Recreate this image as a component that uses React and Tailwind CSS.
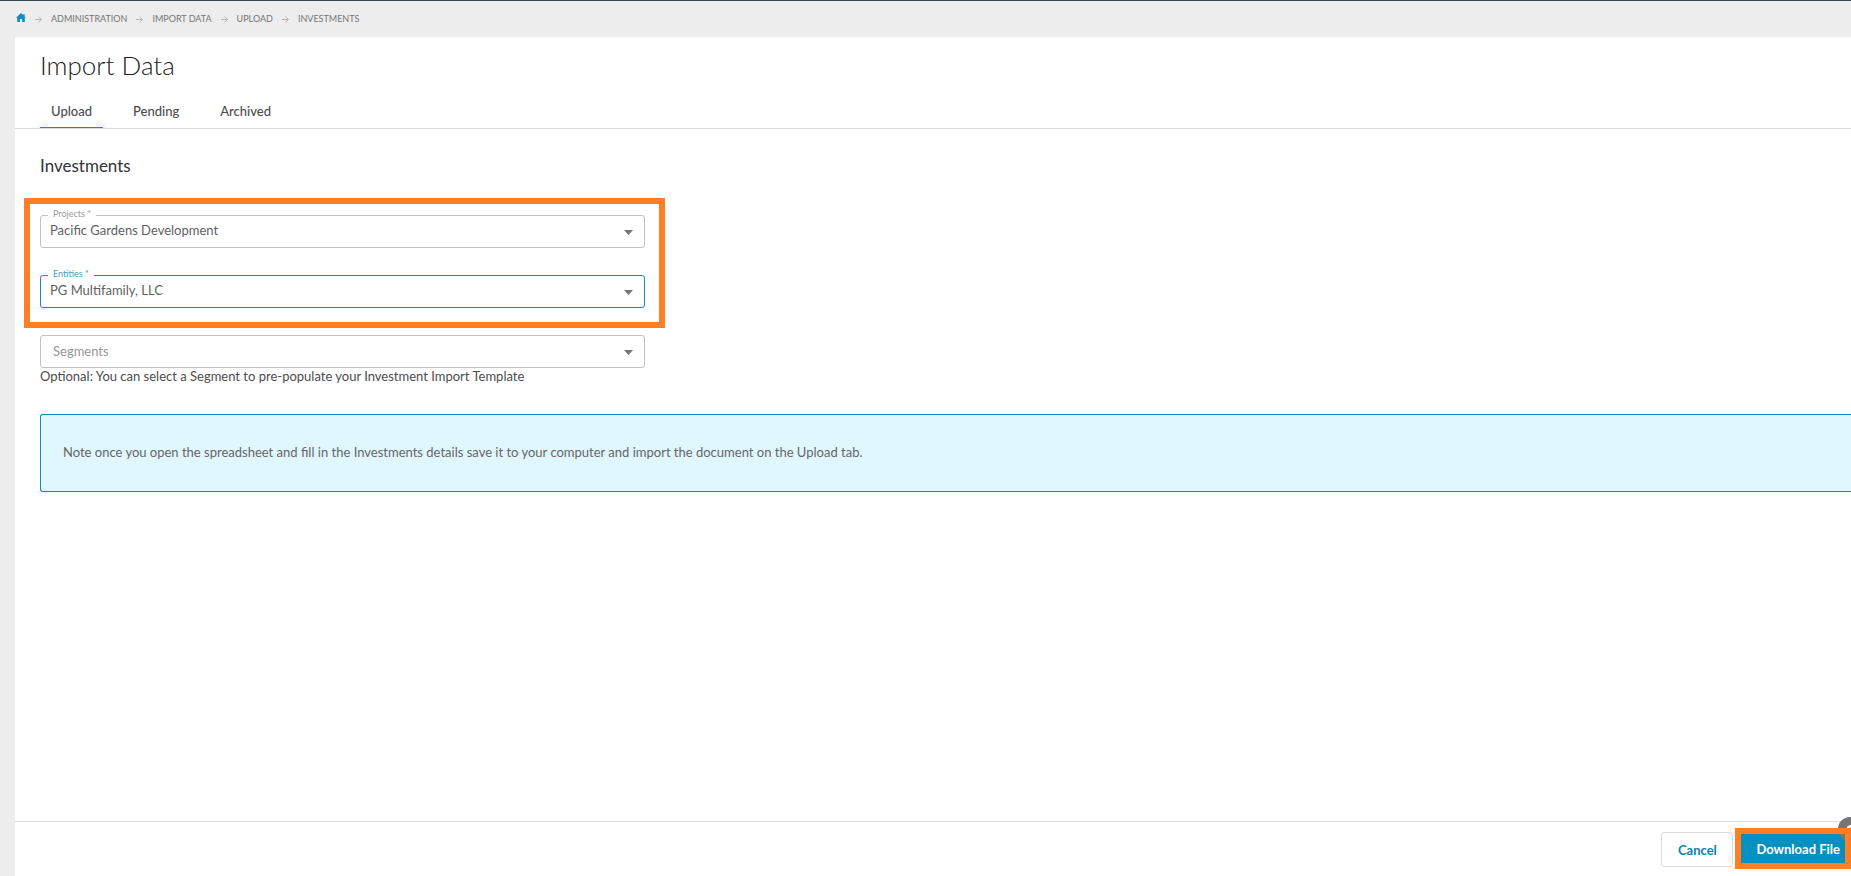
import { useState } from 'react';

const crumbs = ['Administration', 'Import Data', 'Upload', 'Investments'];
const tabs = ['Upload', 'Pending', 'Archived'];

function Arrow() {
  return (
    <svg className="w-[7px] h-[7px] shrink-0" viewBox="0 0 7 7" fill="none" stroke="#b4b4b4" strokeWidth="1">
      <path d="M0 3.5h6.2M3.5 0.6l2.9 2.9-2.9 2.9" />
    </svg>
  );
}

function SelectField({ id, label, value, options, onChange, active }) {
  const filled = value !== '';
  return (
    <div className="relative w-full h-[33px]">
      {filled ? (
        <label
          htmlFor={id}
          className={`absolute left-2 -top-[7px] px-[5px] bg-white text-[9px] leading-3 ${active ? 'text-[#4a9cc0]' : 'text-[#9b9b9b]'}`}
        >
          {label} *
        </label>
      ) : (
        <label htmlFor={id} className="absolute left-[13px] top-2 text-[13px] leading-4 text-[#969696] pointer-events-none">
          {label}
        </label>
      )}
      <select
        id={id}
        value={value}
        onChange={(e) => onChange(e.target.value)}
        className={`w-full h-full appearance-none bg-transparent rounded-[3px] border pl-[9px] pr-8 pb-px text-[13px] text-[#5f5f5f] outline-none ${active ? 'border-[#0b8fb9]' : 'border-[#c1c1c1]'}`}
      >
        <option value=""></option>
        {options.map((o) => (
          <option key={o} value={o}>{o}</option>
        ))}
      </select>
      <svg className="absolute right-3 top-[15px] w-[9px] h-[5px] pointer-events-none" viewBox="0 0 9 5" fill="#757575">
        <path d="M0 0h9L4.5 5z" />
      </svg>
    </div>
  );
}

export default function App() {
  const [tab, setTab] = useState('Upload');
  const [project, setProject] = useState('Pacific Gardens Development');
  const [entity, setEntity] = useState('PG Multifamily, LLC');
  const [segment, setSegment] = useState('');

  return (
    <div className="min-h-screen flex flex-col overflow-hidden bg-[#ededed] border-t border-[#3c4654] font-['Lato','Open_Sans',sans-serif] text-[#4d4d4d]">
      <nav aria-label="Breadcrumb" className="h-9 flex items-center pl-4">
        <a href="#home" aria-label="Home" className="pb-1">
          <svg className="w-[10px] h-[9px]" viewBox="0 0 10 9" fill="#0b8fbf">
            <path d="M5 0L0 4.8h1.2V9h2.7V6h2.2v3h2.7V4.8H10L8.6 3.4V0.9H7.4v1.3z" />
          </svg>
        </a>
        {crumbs.map((c) => (
          <span key={c} className="flex items-center">
            <span className="mx-[9px]"><Arrow /></span>
            <a href={`#${c}`} className="text-[9px] uppercase text-[#757575]">{c}</a>
          </span>
        ))}
      </nav>

      <main className="flex-1 flex flex-col ml-[15px] bg-white">
        <h1 className="pt-3 pl-[25px] text-[26px] leading-8 font-light text-[#222]">Import Data</h1>

        <div role="tablist" className="flex gap-[19px] mt-[19px] pl-[25px] h-[29px] border-b border-[#dcdcdc]">
          {tabs.map((t) => (
            <button
              key={t}
              role="tab"
              aria-selected={tab === t}
              onClick={() => setTab(t)}
              className={`px-[11px] pb-1.5 text-[13px] leading-5 font-medium border-b ${tab === t ? 'border-[#0b8fb9]' : 'border-transparent'}`}
            >
              {t}
            </button>
          ))}
        </div>

        <section className="flex-1 pl-[25px]">
          <h2 className="mt-[25px] text-[17px] leading-6 text-[#333]">Investments</h2>

          <div className="-ml-4 mt-5 max-w-[641px] border-6 border-[#ff7f27] pl-[10px] pr-[14px] pt-[11px] pb-[14px] flex flex-col gap-[27px]">
            <SelectField
              id="projects"
              label="Projects"
              value={project}
              options={['Pacific Gardens Development']}
              onChange={setProject}
            />
            <SelectField
              id="entities"
              label="Entities"
              value={entity}
              options={['PG Multifamily, LLC']}
              onChange={setEntity}
              active
            />
          </div>

          <div className="mt-[7px] max-w-[605px]">
            <SelectField id="segments" label="Segments" value={segment} options={[]} onChange={setSegment} />
            <p className="text-[13px] leading-4">
              Optional: You can select a Segment to pre-populate your Investment Import Template
            </p>
          </div>

          <div className="mt-[30px] h-[78px] flex items-center pl-[22px] pb-[3px] rounded-l-[3px] border border-r-0 border-[#0b8fb9] bg-[#e0f7fe]">
            <p className="text-[13px] leading-4 text-[#666]">
              Note once you open the spreadsheet and fill in the Investments details save it to your computer and import the document on the Upload tab.
            </p>
          </div>
        </section>

        <footer className="relative flex justify-end items-start gap-0.5 h-[55px] pt-1.5 border-t border-[#dcdcdc]">
          <button className="w-[72px] h-[35px] mt-1 pt-0.5 rounded-[3px] border border-[#dcdcdc] text-[13px] font-bold text-[#0b82ad]">
            Cancel
          </button>
          <div className="relative p-1.5">
            <button className="block h-[29px] pl-[15px] pr-[5px] pt-0.5 bg-[#0591c0] text-[13px] font-bold text-white whitespace-nowrap">
              Download File
            </button>
            <span className="absolute z-20 inset-0 border-6 border-[#ff7f27] pointer-events-none" />
          </div>
          <button
            aria-label="Help"
            className="absolute z-10 -right-[11px] -top-[5px] w-6 h-6 rounded-full bg-[#757575] flex items-center pl-[9px]"
          >
            <svg className="w-2 h-2" viewBox="0 0 8 8" fill="none" stroke="#fff" strokeWidth="2">
              <path d="M0 3l4-2.5L8 3M4 1v7" />
            </svg>
          </button>
        </footer>
      </main>
    </div>
  );
}
